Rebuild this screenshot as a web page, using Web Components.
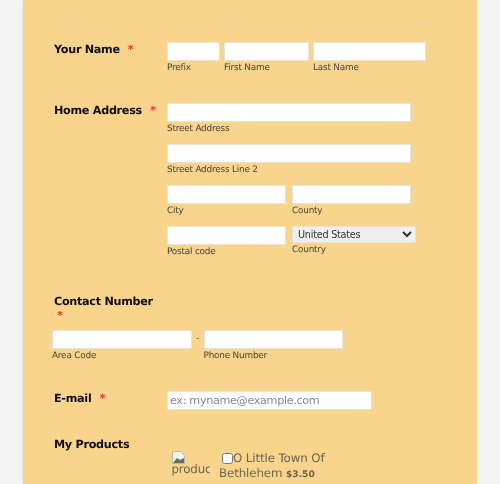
<!DOCTYPE html>
<html>
<head>
<meta charset="utf-8">
<style>
  html, body { height: 100%; }
  body { margin: 0; background: #f4f4f4; overflow: hidden; font-family: "DejaVu Sans", sans-serif; text-rendering: geometricPrecision; }
</style>
</head>
<body>
<form-page>
  <form-row label="Your Name" required row-height="61">
    <field-group>
      <text-field w="53" caption="Prefix"></text-field>
      <text-field w="85" caption="First Name"></text-field>
      <text-field w="113" caption="Last Name"></text-field>
    </field-group>
  </form-row>
  <form-row label="Home Address" required row-height="191">
    <address-block></address-block>
  </form-row>
  <phone-row></phone-row>
  <form-row label="E-mail" required row-height="46">
    <text-field w="205" placeholder="ex: myname@example.com"></text-field>
  </form-row>
  <products-row></products-row>
</form-page>

<script>
const makeTemplate = (markup) => {
  const template = document.createElement('template')
  template.innerHTML = markup
  return template
}

const pageTemplate = makeTemplate(`
  <style>
    :host { display: block; box-sizing: border-box; width: 454px; height: 484px; margin-left: 23px; overflow: hidden;
      background: #f9d48b; box-shadow: 0 0 3px rgba(0,0,0,.12); padding: 23px 31px 0; filter: blur(.3px); }
    .rule { height: 1px; background: #e6d9bd; margin-bottom: 18px; width: 390px; }
  </style>
  <div class="rule"></div>
  <slot></slot>
`)

class FormPage extends HTMLElement {
  constructor () {
    super()
    this.attachShadow({mode: 'open'})
    this.shadowRoot.appendChild(pageTemplate.content.cloneNode(true))
  }
}

const rowTemplate = makeTemplate(`
  <style>
    :host { display: flex; }
    .label { width: 113px; flex: none; font-size: 11.2px; letter-spacing: -.28px; line-height: 14px; padding-top: 1px; font-weight: bold; color: #0d0d0d; white-space: nowrap; box-sizing: border-box; }
    .star { color: #fa3030; margin-left: 8px; font-weight: bold; }
  </style>
  <div class="label"><span id="text"></span><span class="star" id="star">*</span></div>
  <div class="body"><slot></slot></div>
`)

class FormRow extends HTMLElement {
  constructor () {
    super()
    this.attachShadow({mode: 'open'})
    this.shadowRoot.appendChild(rowTemplate.content.cloneNode(true))
  }

  connectedCallback () {
    this.shadowRoot.getElementById('text').textContent = this.getAttribute('label')
    if (!this.hasAttribute('required')) this.shadowRoot.getElementById('star').remove()
    this.style.height = this.getAttribute('row-height') + 'px'
  }
}

const fieldTemplate = makeTemplate(`
  <style>
    :host { display: block; }
    input { display: block; box-sizing: border-box; height: 19px; margin: 0; padding: 0 2px; background: #fff;
      border: 1px solid #e3e3e3; font: 11.2px "DejaVu Sans", sans-serif; letter-spacing: -.33px; color: #555; outline: none; }
    input::placeholder { color: #8a8a8a; opacity: 1; }
    .cap { font-size: 8.9px; letter-spacing: -.2px; line-height: 11px; color: #4a4438; margin-top: 2px; white-space: nowrap; }
  </style>
  <input type="text">
  <div class="cap"></div>
`)

class TextField extends HTMLElement {
  constructor () {
    super()
    this.attachShadow({mode: 'open'})
    this.shadowRoot.appendChild(fieldTemplate.content.cloneNode(true))
  }

  connectedCallback () {
    const input = this.shadowRoot.querySelector('input')
    const cap = this.shadowRoot.querySelector('.cap')
    input.style.width = this.getAttribute('w') + 'px'
    if (this.hasAttribute('placeholder')) input.placeholder = this.getAttribute('placeholder')
    if (this.hasAttribute('caption')) cap.textContent = this.getAttribute('caption')
    else cap.remove()
  }
}

const groupTemplate = makeTemplate(`
  <style>
    :host { display: flex; gap: 4px; align-items: flex-start; }
  </style>
  <slot></slot>
`)

class FieldGroup extends HTMLElement {
  constructor () {
    super()
    this.attachShadow({mode: 'open'})
    this.shadowRoot.appendChild(groupTemplate.content.cloneNode(true))
  }
}

const addressTemplate = makeTemplate(`
  <style>
    :host { display: flex; flex-direction: column; gap: 9px; }
    .pair { display: flex; gap: 6px; align-items: flex-start; }
    select { display: block; box-sizing: border-box; width: 124px; height: 17px; margin: 0; padding: 0 0 0 1px; border: 1px solid #e3e3e3;
      background-color: #efefef; font: 9.7px "DejaVu Sans", sans-serif; letter-spacing: -.25px; color: #333; outline: none; }
    .cap { font-size: 8.9px; letter-spacing: -.2px; line-height: 11px; color: #4a4438; margin-top: 2px; white-space: nowrap; }
  </style>
  <text-field w="244" caption="Street Address"></text-field>
  <text-field w="244" caption="Street Address Line 2"></text-field>
  <div class="pair">
    <text-field w="119" caption="City"></text-field>
    <text-field w="119" caption="County"></text-field>
  </div>
  <div class="pair">
    <text-field w="119" caption="Postal code"></text-field>
    <div>
      <select><option>United States</option></select>
      <div class="cap">Country</div>
    </div>
  </div>
`)

class AddressBlock extends HTMLElement {
  constructor () {
    super()
    this.attachShadow({mode: 'open'})
    this.shadowRoot.appendChild(addressTemplate.content.cloneNode(true))
  }
}

const phoneTemplate = makeTemplate(`
  <style>
    :host { display: block; height: 97px; }
    .label { font-size: 11.2px; letter-spacing: -.28px; font-weight: bold; color: #0d0d0d; line-height: 14px; padding-top: 1px; }
    .star { color: #fa3030; font-size: 11.2px; font-weight: bold; padding-left: 3px; line-height: 14px; }
    .fields { display: flex; margin: 7px 0 0 -2px; align-items: flex-start; }
    .dash { width: 12px; text-align: center; font-size: 8.9px; color: #555; line-height: 19px; }
  </style>
  <div class="label">Contact Number</div>
  <div class="star">*</div>
  <div class="fields">
    <text-field w="139.5" caption="Area Code"></text-field>
    <span class="dash">-</span>
    <text-field w="139.5" caption="Phone Number"></text-field>
  </div>
`)

class PhoneRow extends HTMLElement {
  constructor () {
    super()
    this.attachShadow({mode: 'open'})
    this.shadowRoot.appendChild(phoneTemplate.content.cloneNode(true))
  }
}

const productsTemplate = makeTemplate(`
  <style>
    :host { display: block; }
    .label { font-size: 11.2px; letter-spacing: -.28px; font-weight: bold; color: #0d0d0d; line-height: 14px; padding-top: 1px; margin-bottom: -1px; }
    .item { display: flex; gap: 9px; margin-left: 117.5px; }
    .thumb { width: 38.5px; height: 33px; flex: none; overflow: hidden; font-size: 11.8px; letter-spacing: -.15px; line-height: 11px; color: #6a6455; }
    .thumb svg { display: block; }
    .desc { font-size: 11.8px; letter-spacing: -.1px; line-height: 15px; color: #6a6455; width: 125px; }
    .desc input { width: 11px; height: 11px; margin: 0 0 0 3px; vertical-align: -2px; }
    .price { font-size: 9.12px; font-weight: bold; letter-spacing: 0; }
  </style>
  <div class="label">My Products</div>
  <div class="item">
    <div class="thumb">
      <svg width="13" height="13" viewBox="0 0 13 13">
        <path d="M.5.5h8l4 4v8H.5z" fill="#f2f2ef" stroke="#b8b8b0"/>
        <path d="M1 12l4-5 3 2 4-2v5z" fill="#6d6a58"/>
      </svg>
      <span>product</span>
    </div>
    <div class="desc"><input type="checkbox">O Little Town Of Bethlehem <span class="price">$3.50</span></div>
  </div>
`)

class ProductsRow extends HTMLElement {
  constructor () {
    super()
    this.attachShadow({mode: 'open'})
    this.shadowRoot.appendChild(productsTemplate.content.cloneNode(true))
  }
}

window.customElements.define('form-page', FormPage)
window.customElements.define('form-row', FormRow)
window.customElements.define('text-field', TextField)
window.customElements.define('field-group', FieldGroup)
window.customElements.define('address-block', AddressBlock)
window.customElements.define('phone-row', PhoneRow)
window.customElements.define('products-row', ProductsRow)
</script>
</body>
</html>
